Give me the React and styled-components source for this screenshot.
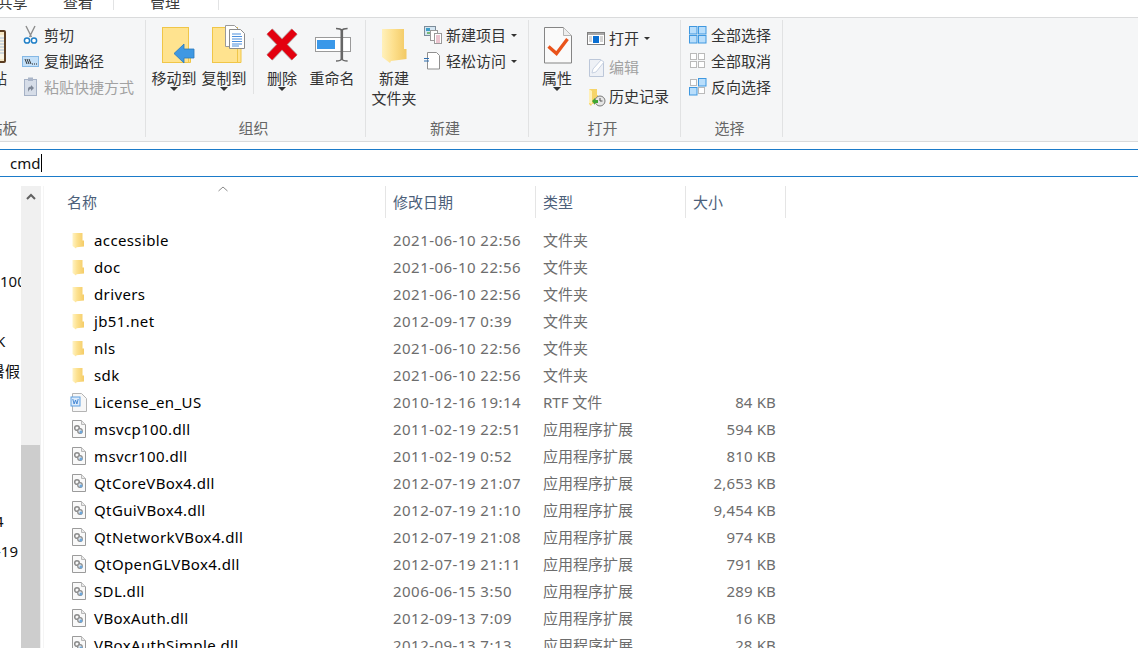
import React from 'react';
import styled, { createGlobalStyle } from 'styled-components';

const Global = createGlobalStyle`
  html, body { margin: 0; padding: 0; background: #fff; height: 100%; overflow: hidden; }
  #root { height: 100%; }
  * { box-sizing: border-box; }
`;

const Page = styled.div`
  width: 1138px; height: 648px; overflow: hidden; display: flex; flex-direction: column;
  background: #fff; color: #000;
  font-family: "Noto Sans", "Noto Sans CJK SC", sans-serif; font-size: 15px;
`;
const TabBar = styled.div`
  height: 17px; flex: none; display: flex; overflow: hidden; margin-left: -17px;
`;
const Tab = styled.div`
  width: ${p => p.$w}px; height: 10px; text-align: center; color: #3b3b3b; line-height: 20px;
  padding-right: ${p => p.$pr || 0}px;
  border-right: 1px solid ${p => (p.$divider ? '#e2e3e4' : 'transparent')};
  & > span { display: block; margin-top: -8px; }
`;
const Ribbon = styled.div`
  height: 125px; flex: none; display: flex; background: #f5f6f7; overflow: hidden;
  border-top: 1px solid #dadbdc; border-bottom: 1px solid #dadbdc; padding: 2px 0 4px;
`;
const Group = styled.div`
  width: ${p => p.$w}px; flex: none; margin-left: ${p => p.$ml || 0}px; display: flex; flex-direction: column;
  border-right: 1px solid #e1e2e3;
`;
const GroupBody = styled.div`
  flex: 1; min-height: 0; display: flex; align-items: flex-start; padding-left: ${p => p.$pl || 0}px;
`;
const GroupLabel = styled.div`
  height: 18px; line-height: 18px; text-align: center; color: #666; padding-right: 4px;
`;
const BigButton = styled.div`
  width: ${p => p.$w || 50}px; flex: none; padding-top: 4px; display: flex; flex-direction: column; align-items: center;
  color: #333; line-height: 20px; text-align: center;
  & > svg { display: block; flex: none; margin-bottom: 3px; }
`;
const Divider = styled.div`
  width: 1px; height: 56px; margin: 18px 3px 0 4px; background: #e1e2e3; flex: none;
`;
const SmallColumn = styled.div`
  display: flex; flex-direction: column; margin-left: ${p => p.$ml || 0}px; padding-top: ${p => p.$pt || 2}px;
`;
const SmallRow = styled.div`
  height: ${p => p.$h || 26}px; line-height: ${p => p.$h || 26}px; display: flex; align-items: center; white-space: nowrap;
  color: ${p => (p.$disabled ? '#a2a2a2' : '#333')};
  & > svg { display: block; flex: none; margin-right: 2px; overflow: visible; }
`;
const BigCaret = styled.div`
  width: 0; height: 0; margin-top: -1px;
  border-left: 4px solid transparent; border-right: 4px solid transparent; border-top: 4px solid #333;
`;
const InlineCaret = styled.span`
  width: 0; height: 0; margin-left: 5px;
  border-left: 3px solid transparent; border-right: 3px solid transparent; border-top: 3px solid #333;
`;
const AddressGap = styled.div`height: 7px; flex: none;`;
const AddressBar = styled.div`
  height: 28px; flex: none; display: flex; align-items: center; padding-left: 10px;
  border-top: 1px solid #1b7bc9; border-bottom: 1px solid #1b7bc9; color: #111;
`;
const Caret = styled.span`
  width: 1px; height: 18px; background: #000; margin-left: 1px;
`;
const Body = styled.div`
  flex: 1; min-height: 0; margin-top: 9px; display: flex;
`;
const Nav = styled.div`
  width: 21px; flex: none; overflow: hidden; padding-top: 20px;
`;
const NavRow = styled.div`
  height: 30px; line-height: 30px; white-space: nowrap; color: #111; margin-left: ${p => p.$x || 0}px;
`;
const Scrollbar = styled.div`
  width: 20px; flex: none; background: #f0f0f0; display: flex; flex-direction: column;
`;
const ScrollUp = styled.div`
  height: 20px; flex: none; margin-bottom: 239px; display: flex; justify-content: center; padding-top: 7px;
  & > svg { display: block; }
`;
const Thumb = styled.div`
  flex: 1; width: 19px; background: #cdcdcd;
`;
const Main = styled.div`
  flex: 1; min-width: 0; margin-left: 2px; border-left: 1px solid #f5f5f5; position: relative; overflow: hidden;
`;
const SortMark = styled.svg`
  position: absolute; left: 174px; top: 0; display: block;
`;
const Columns = styled.div`
  display: grid; grid-template-columns: 342px 150px 150px 100px;
`;
const HeaderCell = styled.div`
  height: 32px; line-height: 32px; color: #4c607a; padding-left: ${p => p.$pl}px; border-right: 1px solid #e5e5e5;
`;
const List = styled.div`
  padding-top: 9px;
`;
const NameCell = styled.div`
  height: 27px; line-height: 27px; display: flex; align-items: center; padding-left: 26px; color: #000; letter-spacing: .38px; white-space: nowrap;
  & > svg { display: block; flex: none; margin-right: 6px; }
`;
const InfoCell = styled.div`
  height: 27px; line-height: 27px; color: #6d6d6d; white-space: nowrap;
  padding: ${p => (p.$right ? '0 10px 0 0' : '0 0 0 7px')};
  text-align: ${p => (p.$right ? 'right' : 'left')};
  letter-spacing: ${p => p.$track || 0}px;
`;

/* ---------- drawn icons ---------- */
const MoveIcon = () => (
  <svg width="50" height="41" viewBox="0 0 50 41">
    <rect x="13.5" y="3.5" width="26" height="35" fill="#ffe38f" stroke="#f0c648" />
    <path d="M39.5 26h2v12.5h-2z" fill="#ffe38f" stroke="#f0c648" />
    <path d="M25 29.5 35 20v5h10v9H35v5z" fill="#3f98e2" stroke="#2a78bd" strokeWidth=".8" />
  </svg>
);
const CopyIcon = () => (
  <svg width="50" height="41" viewBox="0 0 50 41">
    <rect x="13.5" y="3.5" width="25" height="35" fill="#ffe38f" stroke="#f0c648" />
    <path d="M38.5 38.5h3.5V24c0-2-3.5-2-3.5 0z" fill="#ffe38f" stroke="#f0c648" />
    <path d="M26.5 1.5h9l4 4v17h-13z" fill="#fff" stroke="#9a9a9a" />
    <path d="M30.5 5.5h11l4 4v15h-15z" fill="#fff" stroke="#8c8c8c" />
    <path d="M33 10h9M33 12.5h10M33 15h10M33 17.5h10M33 20h10M33 22h7" stroke="#4d8fdc" />
  </svg>
);
const DeleteIcon = () => (
  <svg width="50" height="41" viewBox="0 0 50 41">
    <path d="M12.5 7.500 37.500 33.500M37.500 7.500 12.500 33.500" stroke="#b9a5a5" strokeWidth="8.600" />
    <path d="M12.5 7.500 37.500 33.500M37.500 7.500 12.500 33.500" stroke="#e3000f" strokeWidth="7" />
  </svg>
);
const RenameIcon = () => (
  <svg width="50" height="41" viewBox="0 0 50 41">
    <rect x="8.5" y="13.5" width="35" height="14" fill="#fff" stroke="#9a9a9a" />
    <rect x="10" y="16" width="18" height="9" fill="#3a98e9" />
    <path d="M34.8 5v31" stroke="#666" strokeWidth="2.6" fill="none" />
    <path d="M29 4.5c3 0 5 .6 5.800 2 .8-1.400 2.800-2 5.800-2M29 37c3 0 5-.6 5.800-2 .8 1.400 2.800 2 5.800 2" stroke="#666" strokeWidth="1.500" fill="none" />
  </svg>
);
const NewFolderIcon = () => (
  <svg width="50" height="41" viewBox="0 0 50 41">
    <defs>
      <linearGradient id="nf" x1="0" x2="1" y1="0" y2="0">
        <stop offset="0" stopColor="#fff1bc" />
        <stop offset=".45" stopColor="#fde08e" />
        <stop offset="1" stopColor="#f2c964" />
      </linearGradient>
    </defs>
    <path d="M13 5h22v20h2.500v10L22 37l-1 2-8-6z" fill="url(#nf)" />
  </svg>
);
const PropsIcon = () => (
  <svg width="50" height="41" viewBox="0 0 50 41">
    <path d="M12.500 3.500h19l8 8v27.500h-27z" fill="#fafafa" stroke="#858585" />
    <path d="M31.500 3.500v8h8" fill="#eee" stroke="#b5b5b5" />
    <path d="M16.500 22.500l8 7 11-14.500" fill="none" stroke="#e9531b" strokeWidth="3.300" />
  </svg>
);
const PasteIcon = () => (
  <svg width="46" height="41" viewBox="0 0 46 41">
    <rect x="21" y="7" width="15" height="31" rx="1" fill="#f4e6c4" stroke="#5b3d22" strokeWidth="2" />
    <rect x="23" y="11" width="12" height="24" fill="#f7f3e4" />
    <path d="M24 14h11M24 17h11M24 20h11M24 23h11M24 26h11M24 29h11" stroke="#a8bcd4" />
  </svg>
);
const small = { width: 20, height: 20, viewBox: '0 0 20 20' };
const CutIcon = () => (
  <svg {...small}>
    <path d="M4 1l5.500 11M13 1 7.500 12" stroke="#8d8d8d" strokeWidth="1.400" fill="none" />
    <circle cx="5" cy="15.500" r="2.600" fill="#fff" stroke="#1f7fc7" strokeWidth="1.500" />
    <circle cx="12" cy="15.500" r="2.600" fill="#fff" stroke="#1f7fc7" strokeWidth="1.500" />
  </svg>
);
const PathIcon = () => (
  <svg {...small}>
    <rect x=".5" y="5.500" width="16" height="10" fill="#c4e0f8" stroke="#85b8e5" />
    <path d="M3 8l2 5M5 8l2 5M7 8l2 5" stroke="#222" strokeWidth=".9" />
    <path d="M10 13h1M12 13h1M14 13h1" stroke="#222" />
  </svg>
);
const ShortcutIcon = () => (
  <svg {...small}>
    <rect x="2.500" y="2.500" width="12" height="16" fill="#d6dde8" stroke="#a6b2c6" />
    <rect x="6" y=".5" width="5" height="3.500" fill="#aab5c8" />
    <path d="M6 15v-3c0-1.500 1-2.500 3-2.500V8l3 3-3 3v-2c-1.500 0-2 1-3 3z" fill="#7e8796" />
  </svg>
);
const NewItemIcon = () => (
  <svg {...small}>
    <rect x=".5" y="1.500" width="11" height="9" fill="#d5e6f2" stroke="#7d8c99" />
    <rect x="2" y="3" width="4" height="3" fill="#3f9fc9" />
    <rect x="3" y="7" width="3" height="2" fill="#78b87a" />
    <rect x="6.500" y="5.500" width="7" height="10" fill="#fff" stroke="#9a9a9a" />
    <rect x="10.500" y="8.500" width="7" height="10" fill="#fff" stroke="#9a9a9a" />
    <path d="M12 11h4M12 13h4M12 15h4M12 17h4" stroke="#d98aa0" />
  </svg>
);
const EasyIcon = () => (
  <svg {...small}>
    <path d="M3.500 1.500h9l3 3v13.500h-12z" fill="#fff" stroke="#8f8f8f" />
    <path d="M0 7.500h5M0 10h5" stroke="#2f6fb0" strokeWidth="1.200" />
  </svg>
);
const OpenIcon = () => (
  <svg {...small}>
    <rect x=".5" y="3.500" width="17" height="12" fill="#fff" stroke="#808080" />
    <rect x="1" y="4" width="16" height="2" fill="#a8a8a8" />
    <rect x="6" y="7" width="6" height="7" fill="#0a6fd2" />
    <path d="M2 8h3M2 10h3M2 12h3M13 8h3M13 10h3M13 12h3" stroke="#a9a9a9" />
  </svg>
);
const EditIcon = () => (
  <svg {...small}>
    <path d="M2.500 1.500h11l3 3v14h-14z" fill="#eef1f6" stroke="#bcc7d9" />
    <path d="M5 15l1-4L14 2l3 2-8 10z" fill="#fff" stroke="#c8d2e2" />
  </svg>
);
const HistoryIcon = () => (
  <svg {...small}>
    <path d="M2 2h8v6h1v8l-6 1-1 2-2-2z" fill="#f6d469" />
    <path d="M2 2l3 2v13l-3-1z" fill="#fff0b8" />
    <circle cx="13" cy="14" r="5" fill="#e6e6e6" stroke="#7a7a7a" />
    <path d="M13 11v3h2.500" fill="none" stroke="#555" />
    <path d="M5 14l3-3v2h3v3H8v2z" fill="#3fa535" />
  </svg>
);
const OnCell = ({ x, y }) => (
  <rect x={x} y={y} width="7.500" height="7.500" fill="#b9defb" stroke="#3f98e0" />
);
const OffCell = ({ x, y }) => (
  <rect x={x} y={y} width="6" height="6" fill="#fff" stroke="#bababa" />
);
const GridIcon = ({ cells }) => {
  const slots = [[.5, 1.500], [9.500, 1.500], [.5, 10.500], [9.500, 10.500]];
  const off = [[1.500, 2.500], [9.500, 2.500], [1.500, 10.500], [9.500, 10.500]];
  return (
    <svg {...small}>
      {cells.map((on, i) => (on
        ? <OnCell key={i} x={slots[i][0]} y={slots[i][1]} />
        : <OffCell key={i} x={off[i][0]} y={off[i][1]} />))}
    </svg>
  );
};
const FolderRow = () => (
  <svg width="18" height="20" viewBox="0 0 18 20">
    <defs>
      <linearGradient id="fr" x1="0" x2="1" y1="0" y2="0">
        <stop offset="0" stopColor="#fff3c4" />
        <stop offset=".4" stopColor="#fde18f" />
        <stop offset="1" stopColor="#f4cc67" />
      </linearGradient>
    </defs>
    <path d="M2.500 2H12.500V9.500H14V15.500L6.500 16.200 6 17.500 2.500 15z" fill="url(#fr)" />
  </svg>
);
const DllRow = () => (
  <svg width="18" height="20" viewBox="0 0 18 20">
    <path d="M2.500 .5h9l4 4v13h-13z" fill="#f9f9f9" stroke="#9b9b9b" />
    <path d="M11.500 .5v4h4" fill="#e9e9e9" stroke="#b8b8b8" />
    <circle cx="7" cy="8" r="2.300" fill="none" stroke="#8d8d8d" strokeWidth="1.500" />
    <circle cx="10" cy="11" r="2.300" fill="#dfe7ef" stroke="#8d8d8d" strokeWidth="1.200" />
    <circle cx="11" cy="12" r="1.500" fill="#6ca7dc" />
  </svg>
);
const RtfRow = () => (
  <svg width="18" height="20" viewBox="0 0 18 20">
    <path d="M2.500 .5h9l5 5v13h-14z" fill="#f7f7f7" stroke="#b4b4b4" />
    <rect x="1" y="4" width="9" height="9" fill="#dcebfb" stroke="#5f9fe0" />
    <path d="M2.800 6l1.300 5 1.400-4 1.400 4 1.300-5" fill="none" stroke="#3a80d0" strokeWidth=".9" />
  </svg>
);
const UpIcon = () => (
  <svg width="10" height="7" viewBox="0 0 10 7">
    <path d="M1 6l4-4 4 4" fill="none" stroke="#606060" strokeWidth="2" />
  </svg>
);

/* ---------- data ---------- */
const F = 'folder', D = 'dll', R = 'rtf';
const APP = '应用程序扩展', DIR = '文件夹';
const rows = [
  [F, 'accessible', '2021-06-10 22:56', DIR, ''],
  [F, 'doc', '2021-06-10 22:56', DIR, ''],
  [F, 'drivers', '2021-06-10 22:56', DIR, ''],
  [F, 'jb51.net', '2012-09-17 0:39', DIR, ''],
  [F, 'nls', '2021-06-10 22:56', DIR, ''],
  [F, 'sdk', '2021-06-10 22:56', DIR, ''],
  [R, 'License_en_US', '2010-12-16 19:14', 'RTF 文件', '84 KB'],
  [D, 'msvcp100.dll', '2011-02-19 22:51', APP, '594 KB'],
  [D, 'msvcr100.dll', '2011-02-19 0:52', APP, '810 KB'],
  [D, 'QtCoreVBox4.dll', '2012-07-19 21:07', APP, '2,653 KB'],
  [D, 'QtGuiVBox4.dll', '2012-07-19 21:10', APP, '9,454 KB'],
  [D, 'QtNetworkVBox4.dll', '2012-07-19 21:08', APP, '974 KB'],
  [D, 'QtOpenGLVBox4.dll', '2012-07-19 21:11', APP, '791 KB'],
  [D, 'SDL.dll', '2006-06-15 3:50', APP, '289 KB'],
  [D, 'VBoxAuth.dll', '2012-09-13 7:09', APP, '16 KB'],
  [D, 'VBoxAuthSimple.dll', '2012-09-13 7:13', APP, '28 KB'],
];
const navRows = [
  ['', 0], ['', 0], ['100', 0], ['', 0], ['K', -4], ['暑假', -10], ['', 0], ['', 0], ['', 0], ['', 0], ['4', -5], ['-19', -4],
];
const rowIcons = { folder: FolderRow, dll: DllRow, rtf: RtfRow };

export default function App() {
  return (
    <Page>
      <Global />
      <TabBar>
        <Tab $w={60}><span>共享</span></Tab>
        <Tab $w={71} $divider><span>查看</span></Tab>
        <Tab $w={105} $pr={2} $divider><span>管理</span></Tab>
      </TabBar>
      <Ribbon>
        <Group $w={297} $ml={-151}>
          <GroupBody $pl={120}>
            <BigButton $w={46}><PasteIcon />粘贴</BigButton>
            <SmallColumn $ml={7}>
              <SmallRow><CutIcon />剪切</SmallRow>
              <SmallRow><PathIcon />复制路径</SmallRow>
              <SmallRow $disabled><ShortcutIcon />粘贴快捷方式</SmallRow>
            </SmallColumn>
          </GroupBody>
          <GroupLabel>剪贴板</GroupLabel>
        </Group>
        <Group $w={220}>
          <GroupBody $pl={3}>
            <BigButton><MoveIcon />移动到<BigCaret /></BigButton>
            <BigButton><CopyIcon />复制到<BigCaret /></BigButton>
            <Divider />
            <BigButton><DeleteIcon />删除<BigCaret /></BigButton>
            <BigButton><RenameIcon />重命名</BigButton>
          </GroupBody>
          <GroupLabel>组织</GroupLabel>
        </Group>
        <Group $w={163}>
          <GroupBody $pl={3}>
            <BigButton><NewFolderIcon />新建<br />文件夹</BigButton>
            <SmallColumn $ml={5}>
              <SmallRow><NewItemIcon />新建项目<InlineCaret /></SmallRow>
              <SmallRow><EasyIcon />轻松访问<InlineCaret /></SmallRow>
            </SmallColumn>
          </GroupBody>
          <GroupLabel>新建</GroupLabel>
        </Group>
        <Group $w={152}>
          <GroupBody $pl={3}>
            <BigButton><PropsIcon />属性<BigCaret /></BigButton>
            <SmallColumn $ml={5} $pt={4}>
              <SmallRow $h={29}><OpenIcon />打开<InlineCaret /></SmallRow>
              <SmallRow $h={29} $disabled><EditIcon />编辑</SmallRow>
              <SmallRow $h={29}><HistoryIcon />历史记录</SmallRow>
            </SmallColumn>
          </GroupBody>
          <GroupLabel>打开</GroupLabel>
        </Group>
        <Group $w={102}>
          <GroupBody $pl={8}>
            <SmallColumn>
              <SmallRow><GridIcon cells={[1, 1, 1, 1]} />全部选择</SmallRow>
              <SmallRow><GridIcon cells={[0, 0, 0, 0]} />全部取消</SmallRow>
              <SmallRow><GridIcon cells={[0, 1, 1, 0]} />反向选择</SmallRow>
            </SmallColumn>
          </GroupBody>
          <GroupLabel>选择</GroupLabel>
        </Group>
      </Ribbon>
      <AddressGap />
      <AddressBar>cmd<Caret /></AddressBar>
      <Body>
        <Nav>
          {navRows.map(([t, x], i) => <NavRow key={i} $x={x}>{t || '\u00a0'}</NavRow>)}
        </Nav>
        <Scrollbar>
          <ScrollUp><UpIcon /></ScrollUp>
          <Thumb />
        </Scrollbar>
        <Main>
          <SortMark width="10" height="6" viewBox="0 0 10 6">
            <path d="M.5 5 5 1l4.500 4" fill="none" stroke="#8a8a8a" />
          </SortMark>
          <Columns>
            <HeaderCell $pl={23}>名称</HeaderCell>
            <HeaderCell $pl={7}>修改日期</HeaderCell>
            <HeaderCell $pl={7}>类型</HeaderCell>
            <HeaderCell $pl={7}>大小</HeaderCell>
          </Columns>
          <List>
            {rows.map(([kind, name, date, type, size]) => {
              const Icon = rowIcons[kind];
              return (
                <Columns key={name}>
                  <NameCell><Icon />{name}</NameCell>
                  <InfoCell $track={0.47}>{date}</InfoCell>
                  <InfoCell>{type}</InfoCell>
                  <InfoCell $right $track={0.15}>{size}</InfoCell>
                </Columns>
              );
            })}
          </List>
        </Main>
      </Body>
    </Page>
  );
}
